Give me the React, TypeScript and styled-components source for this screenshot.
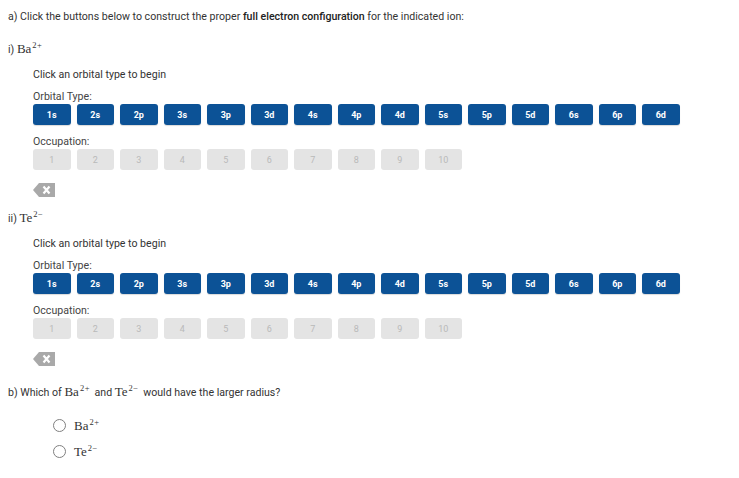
import React from 'react';
import styled, { createGlobalStyle } from 'styled-components';

const GlobalStyle = createGlobalStyle`
  body {
    margin: 0;
    background: #fff;
    font-family: Roboto, "Liberation Sans", Arial, sans-serif;
    color: #333;
  }
`;

const orbitals = ['1s', '2s', '2p', '3s', '3p', '3d', '4s', '4p', '4d', '5s', '5p', '5d', '6s', '6p', '6d'];
const occupations = [1, 2, 3, 4, 5, 6, 7, 8, 9, 10];

const Page = styled.div`
  padding: 10px 8px 0 8px;
  font-size: 10.6px;
`;

const Prompt = styled.p`
  margin: 0;
  line-height: 14px;
  b { font-weight: 500; color: #222; }
`;

const IonTitle = styled.div<{ $top: number }>`
  margin-top: ${p => p.$top}px;
  line-height: 16px;
`;

const Math = styled.span`
  font-family: "Liberation Serif", "DejaVu Serif", serif;
  font-size: 13px;
  color: #333;
  sup {
    font-size: 8.5px;
    vertical-align: 5px;
    margin-left: 1px;
    margin-right: 2px;
    letter-spacing: 0.5px;
  }
`;

const Builder = styled.div`
  padding-left: 25px;
  display: flex;
  flex-direction: column;
`;

const Hint = styled.div`
  margin-top: 10px;
  line-height: 14px;
`;

const Label = styled.div<{ $top: number }>`
  margin-top: ${p => p.$top}px;
  line-height: 12px;
  color: #444;
`;

const ButtonRow = styled.div`
  display: flex;
  gap: 6px;
  margin-top: 1px;
`;

const OrbitalButton = styled.button`
  width: 37.5px;
  height: 21px;
  border: none;
  border-radius: 3px;
  background: #0c5296;
  color: #fff;
  font-family: Roboto, "Liberation Sans", sans-serif;
  font-weight: 700;
  font-size: 9px;
  padding: 0;
  box-shadow: 0 1px 1px rgba(0, 0, 0, 0.15);
`;

const OccupationButton = styled.button`
  width: 37.5px;
  height: 21px;
  border: none;
  border-radius: 3px;
  background: #e4e4e4;
  color: #b9b9b9;
  font-family: Roboto, "Liberation Sans", sans-serif;
  font-size: 9px;
  padding: 0;
`;

const DeleteButton = styled.div`
  margin-top: 13px;
  width: 22px;
  height: 14px;
  display: flex;
`;

const Question = styled.p`
  margin: 14px 0 0 0;
  line-height: 16px;
`;

const Options = styled.div`
  display: flex;
  flex-direction: column;
  gap: 8px;
  margin-top: 15px;
  padding-left: 45px;
`;

const Option = styled.label`
  display: flex;
  align-items: center;
  gap: 8px;
  height: 18px;
`;

const Radio = styled.span`
  width: 11px;
  height: 11px;
  border: 1.2px solid #808080;
  border-radius: 50%;
  display: inline-block;
`;

const Ba = () => <Math>Ba<sup>2+</sup></Math>;
const Te = () => <Math>Te<sup>2−</sup></Math>;

const BackspaceIcon = () => (
  <svg width="22" height="14" viewBox="0 0 22 14">
    <path d="M6 0 H22 V14 H6 L0 7 Z" fill="#a9a9a9" />
    <path d="M10.5 3.5 L16.5 10.5 M16.5 3.5 L10.5 10.5" stroke="#fff" strokeWidth="2.2" />
  </svg>
);

const ConfigBuilder = () => (
  <Builder>
    <Hint>Click an orbital type to begin</Hint>
    <Label $top={9}>Orbital Type:</Label>
    <ButtonRow>
      {orbitals.map(o => <OrbitalButton key={o}>{o}</OrbitalButton>)}
    </ButtonRow>
    <Label $top={11}>Occupation:</Label>
    <ButtonRow>
      {occupations.map(n => <OccupationButton key={n}>{n}</OccupationButton>)}
    </ButtonRow>
    <DeleteButton><BackspaceIcon /></DeleteButton>
  </Builder>
);

export default function App() {
  return (
    <>
      <GlobalStyle />
      <Page>
        <Prompt>
          a) Click the buttons below to construct the proper <b>full electron configuration</b> for the indicated ion:
        </Prompt>
        <IonTitle $top={13}>i) <Ba /></IonTitle>
        <ConfigBuilder />
        <IonTitle $top={9}>ii) <Te /></IonTitle>
        <ConfigBuilder />
        <Question>
          b) Which of <Ba /> and <Te /> would have the larger radius?
        </Question>
        <Options>
          <Option><Radio /><Ba /></Option>
          <Option><Radio /><Te /></Option>
        </Options>
      </Page>
    </>
  );
}
